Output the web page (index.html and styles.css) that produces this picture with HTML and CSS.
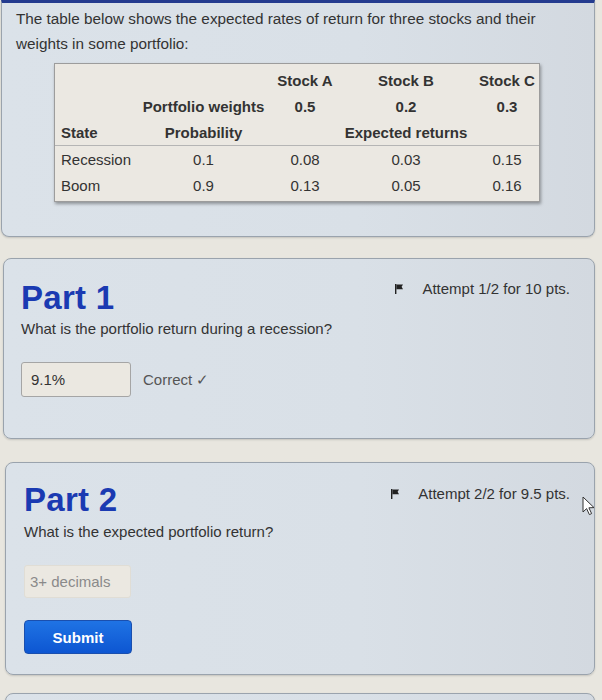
FILE: index.html
```html
<!DOCTYPE html>
<html>
<head>
<meta charset="utf-8">
<link rel="stylesheet" href="styles.css">
</head>
<body>
<div class="page">
  <section class="card intro">
    <p class="lead">The table below shows the expected rates of return for three stocks and their weights in some portfolio:</p>
    <div class="tbl">
      <div class="row">
        <div></div><div></div><div class="b c">Stock A</div><div class="b c">Stock B</div><div class="b c">Stock C</div>
      </div>
      <div class="row">
        <div></div><div class="b c">Portfolio weights</div><div class="b c">0.5</div><div class="b c">0.2</div><div class="b c">0.3</div>
      </div>
      <div class="row head">
        <div class="b l">State</div><div class="b c">Probability</div><div></div><div class="b c">Expected returns</div><div></div>
      </div>
      <div class="row">
        <div class="l">Recession</div><div class="c">0.1</div><div class="c">0.08</div><div class="c">0.03</div><div class="c">0.15</div>
      </div>
      <div class="row">
        <div class="l">Boom</div><div class="c">0.9</div><div class="c">0.13</div><div class="c">0.05</div><div class="c">0.16</div>
      </div>
    </div>
  </section>

  <section class="card part">
    <div class="part-head">
      <h2 class="part-title">Part 1</h2>
      <div class="attempt">
        <svg class="flag" width="9" height="10" viewBox="0 0 9 10"><rect x="0" y="0" width="1.4" height="10" fill="#222"/><path d="M1.4 0.5 H8 L6.6 2.8 L8 5.2 H1.4 Z" fill="#222"/></svg>
        <span>Attempt 1/2 for 10 pts.</span>
      </div>
    </div>
    <p class="question">What is the portfolio return during a recession?</p>
    <div class="answer-row">
      <div class="input filled">9.1%</div>
      <span class="correct">Correct ✓</span>
    </div>
  </section>

  <section class="card part part2">
    <div class="part-head">
      <h2 class="part-title">Part 2</h2>
      <div class="attempt">
        <svg class="flag" width="9" height="10" viewBox="0 0 9 10"><rect x="0" y="0" width="1.4" height="10" fill="#222"/><path d="M1.4 0.5 H8 L6.6 2.8 L8 5.2 H1.4 Z" fill="#222"/></svg>
        <span>Attempt 2/2 for 9.5 pts.</span>
      </div>
    </div>
    <p class="question">What is the expected portfolio return?</p>
    <div class="input empty">3+ decimals</div>
    <button class="submit">Submit</button>
    <svg class="cursor" width="14" height="20" viewBox="0 0 14 20"><path d="M1 1 L1 16 L4.6 12.6 L7.4 18.6 L9.6 17.6 L6.9 11.8 L12 11.6 Z" fill="#fff" stroke="#333" stroke-width="1" stroke-linejoin="round"/></svg>
  </section>

  <section class="card next"></section>
</div>
</body>
</html>
```
FILE: styles.css
```css
html, body {
  margin: 0;
  padding: 0;
  background: #e8e6df;
}
body {
  font-family: "Liberation Sans", Arial, sans-serif;
  color: #333;
  font-size: 15px;
}
.page {
  width: 602px;
  height: 700px;
  overflow: hidden;
  display: flex;
  flex-direction: column;
}
.card {
  flex: none;
  background: linear-gradient(90deg, #dbe2e9 0%, #d9e0e7 60%, #d3d9e0 100%);
  border: 1px solid #9aa3ad;
  border-radius: 8px;
  margin: 0 7px 0 3px;
  box-shadow: 0 1px 2px rgba(0,0,0,0.15);
}
.intro {
  border-top: 3px solid #243b8f;
  border-radius: 0 0 8px 8px;
  height: 237px;
  box-sizing: border-box;
  padding: 3px 20px 0 14px;
  margin-left: 1px;
}
.lead {
  margin: 0;
  line-height: 25px;
  font-size: 15.3px;
  color: #333;
}
.tbl {
  margin: 7px 0 0 38px;
  width: 486px;
  box-sizing: border-box;
  background: #ebe8e2;
  border: 1px solid #9c9c9c;
  box-shadow: 1px 2px 3px rgba(0,0,0,0.35);
  padding: 3px 0 3px;
}
.row {
  display: grid;
  grid-template-columns: 81px 135px 68px 134px 68px;
  height: 26px;
  align-items: center;
  font-size: 15px;
  color: #333;
}
.row.head {
  border-bottom: 1px solid #b5b5b5;
}
.b { font-weight: bold; color: #333; }
.c { text-align: center; white-space: nowrap; }
.l { padding-left: 6px; }

.part {
  margin-top: 21px;
  padding: 21px 24px 0 17px;
  box-sizing: border-box;
  height: 181px;
  position: relative;
}
.part2 {
  margin-top: 23px;
  height: 213px;
  margin-left: 5px;
  padding-top: 19px;
  padding-left: 18px;
}
.part-title {
  margin: 0;
  font-size: 33px;
  line-height: 36px;
  font-weight: bold;
  color: #1a3ab2;
  letter-spacing: 0.3px;
}
.part-head {
  display: flex;
  justify-content: space-between;
  align-items: flex-start;
}
.attempt {
  display: flex;
  align-items: center;
  gap: 18px;
  line-height: 18px;
  font-size: 15px;
  color: #333;
}
.part2 .attempt { margin-top: 3px; }
.flag { display: block; }
.question {
  margin: 3px 0 0;
  line-height: 20px;
  font-size: 15px;
  color: #333;
}
.part2 .question { margin-top: 4px; }
.answer-row {
  display: flex;
  align-items: center;
  gap: 12px;
  margin-top: 23px;
}
.input {
  box-sizing: border-box;
  background: #ebe8e1;
  border-radius: 3px;
  font-size: 15px;
  display: flex;
  align-items: center;
}
.input.filled {
  width: 110px;
  height: 35px;
  border: 1px solid #a5a5a5;
  padding-left: 9px;
  color: #333;
}
.input.empty {
  width: 107px;
  height: 33px;
  margin-top: 23px;
  border: 1px solid #e0ddd5;
  padding-left: 5px;
  color: #8a8a8a;
}
.correct {
  color: #555;
  font-size: 15px;
}
.submit {
  display: block;
  margin-top: 22px;
  width: 108px;
  height: 34px;
  border: 1px solid #1a4fae;
  border-radius: 4px;
  background: linear-gradient(180deg, #1f73e4 0%, #0d56d2 100%);
  color: #fff;
  font-family: "Liberation Sans", Arial, sans-serif;
  font-size: 15px;
  font-weight: bold;
}
.cursor {
  position: absolute;
  right: -2px;
  top: 33px;
}
.next {
  margin-top: 18px;
  height: 40px;
  margin-left: 5px;
}
```
